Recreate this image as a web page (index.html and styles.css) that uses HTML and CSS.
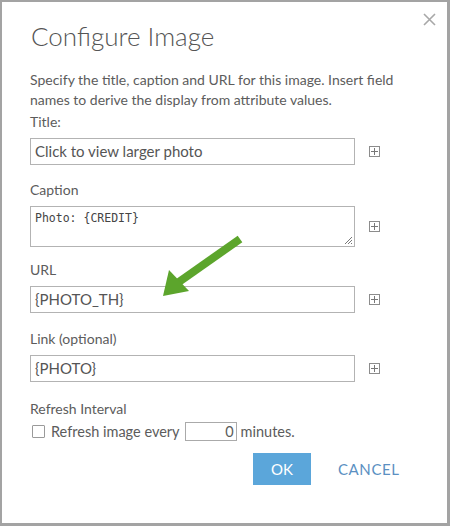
FILE: index.html
```html
<!DOCTYPE html>
<html>
<head>
<meta charset="utf-8">
<link rel="stylesheet" href="styles.css">
</head>
<body>
<div class="dialog">
  <button class="close" aria-label="close">
    <svg width="13" height="13" viewBox="0 0 13 13"><path d="M1 1 L12 12 M12 1 L1 12" stroke="#a8a8a8" stroke-width="1.6" fill="none"/></svg>
  </button>
  <h1 class="title">Configure Image</h1>
  <p class="desc">Specify the title, caption and URL for this image. Insert field names to derive the display from attribute values.</p>

  <div class="field f-title">
    <div class="label">Title:</div>
    <div class="row">
      <div class="input">Click to view larger photo</div>
      <span class="plus"></span>
    </div>
  </div>

  <div class="field f-caption">
    <div class="label">Caption</div>
    <div class="row">
      <div class="input area">Photo: {CREDIT}
        <svg class="grip" width="9" height="9" viewBox="0 0 9 9"><path d="M8 1 L1 8 M8 4 L4 8 M8 7 L7 8" stroke="#777" stroke-width="1"/></svg>
      </div>
      <span class="plus"></span>
    </div>
  </div>

  <div class="field f-url">
    <div class="label">URL</div>
    <div class="row">
      <div class="input">{PHOTO_TH}</div>
      <span class="plus"></span>
    </div>
  </div>

  <div class="field f-link">
    <div class="label">Link (optional)</div>
    <div class="row">
      <div class="input">{PHOTO}</div>
      <span class="plus"></span>
    </div>
  </div>

  <div class="field refresh">
    <div class="label">Refresh Interval</div>
    <div class="check-row">
      <span class="checkbox"></span>
      <span>Refresh image every</span>
      <span class="num">0</span>
      <span>minutes.</span>
    </div>
  </div>

  <div class="actions">
    <button class="ok">OK</button>
    <button class="cancel">CANCEL</button>
  </div>

  <svg class="arrow" width="450" height="526" viewBox="0 0 450 526">
    <line x1="240" y1="239" x2="176" y2="284" stroke="#5ca52c" stroke-width="8" stroke-linecap="butt"/>
    <polygon points="163,296 169,270 189,291" fill="#5ca52c"/>
  </svg>
</div>
</body>
</html>
```
FILE: styles.css
```css
* { box-sizing: border-box; }
html, body { margin: 0; padding: 0; background: #fff; }
body { font-family: Lato, "Open Sans", sans-serif; color: #5a5a5a; }

.dialog {
  position: relative;
  width: 450px;
  height: 526px;
  border: 2px solid #a3a3a3;
  border-right-width: 3px;
  border-bottom-width: 3px;
  background: #fff;
  padding: 0 0 0 28px;
}

.close {
  position: absolute;
  top: 11px;
  right: 11px;
  border: 0;
  background: none;
  padding: 0;
  width: 13px;
  height: 13px;
}
.close svg { display: block; }

.title {
  margin: 19px 0 0 1px;
  font-size: 26px;
  line-height: 30px;
  font-weight: 300;
  color: #555;
}

.desc {
  margin: 19px 0 0 0;
  width: 390px;
  font-size: 14px;
  line-height: 20px;
  color: #5c5c5c;
}

.label {
  font-size: 14px;
  line-height: 20px;
  color: #5c5c5c;
}

.f-title { margin-top: 2px; }
.f-caption { margin-top: 15px; }
.f-url { margin-top: 13px; }
.f-link { margin-top: 16px; }
.refresh { margin-top: 17px; }

.row {
  display: flex;
  align-items: center;
  gap: 14px;
  margin-top: 6px;
}

.input {
  position: relative;
  width: 325px;
  height: 27px;
  border: 1px solid #b3b3b3;
  font-size: 15px;
  line-height: 25px;
  padding: 0 4px;
  color: #555;
}

.input.area {
  height: 41px;
  font-family: "DejaVu Sans Mono", "Liberation Mono", monospace;
  font-size: 11.5px;
  line-height: 14px;
  padding-top: 4px;
  color: #444;
  white-space: pre;
}

.grip {
  position: absolute;
  right: 1px;
  bottom: 1px;
}

.plus {
  position: relative;
  width: 11px;
  height: 11px;
  border: 1px solid #8c8c8c;
}
.plus::before, .plus::after {
  content: "";
  position: absolute;
  background: #777;
}
.plus::before { left: 1px; right: 1px; top: 4px; height: 1px; }
.plus::after { top: 1px; bottom: 1px; left: 4px; width: 1px; }

.check-row {
  display: flex;
  align-items: center;
  font-size: 14.5px;
  color: #5c5c5c;
  margin-top: 2px;
  margin-left: 2px;
  height: 20px;
}
.checkbox {
  width: 13px;
  height: 13px;
  border: 1px solid #9a9a9a;
  border-radius: 1px;
  margin-right: 6px;
}
.num {
  width: 52px;
  height: 19px;
  border: 1px solid #aaa;
  margin: 0 4px 0 5px;
  text-align: right;
  padding-right: 2px;
  line-height: 17px;
}

.actions {
  display: flex;
  align-items: center;
  margin-top: 12px;
  padding-left: 223px;
}
.ok {
  width: 58px;
  height: 32px;
  border: 0;
  background: #5ba6da;
  color: #fff;
  font-family: Lato, sans-serif;
  font-size: 15px;
  padding: 0;
}
.cancel {
  border: 0;
  background: none;
  padding: 0;
  margin-left: 27px;
  color: #5b90c2;
  font-family: Lato, sans-serif;
  font-size: 15px;
  letter-spacing: 0.6px;
}

.arrow {
  position: absolute;
  left: -2px;
  top: -2px;
  pointer-events: none;
}
```
